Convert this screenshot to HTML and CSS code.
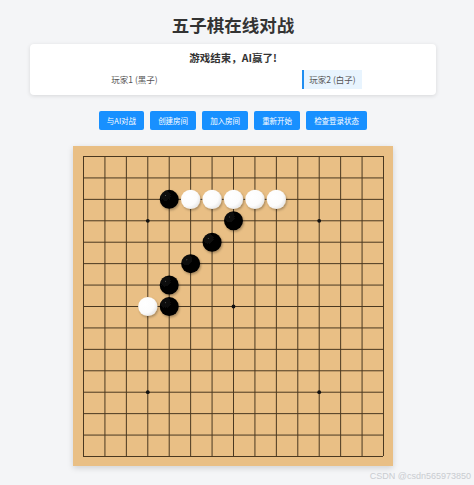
FILE: index.html
```html
<!DOCTYPE html>
<html lang="zh-CN">
<head>
<meta charset="utf-8">
<title>五子棋在线对战</title>
<link rel="stylesheet" href="styles.css">
</head>
<body>
<div class="page">
  <h1 class="title">五子棋在线对战</h1>
  <div class="card">
    <div class="status">游戏结束，AI赢了!</div>
    <div class="players">
      <div class="player">玩家1 (黑子)</div>
      <div class="player active">玩家2 (白子)</div>
    </div>
  </div>
  <div class="actions">
    <button class="btn">与AI对战</button>
    <button class="btn">创建房间</button>
    <button class="btn">加入房间</button>
    <button class="btn">重新开始</button>
    <button class="btn">检查登录状态</button>
  </div>
  <div class="board">
    <svg class="board-svg" width="320" height="320" viewBox="0 0 320 320">
      <defs>
        <radialGradient id="gb" cx="30%" cy="30%" r="70%">
          <stop offset="0" stop-color="#5a5a5a"/>
          <stop offset="0.07" stop-color="#0a0a0a"/>
          <stop offset="1" stop-color="#000"/>
        </radialGradient>
        <radialGradient id="gw" cx="35%" cy="35%" r="65%">
          <stop offset="0" stop-color="#ffffff"/>
          <stop offset="0.75" stop-color="#fcfcfc"/>
          <stop offset="1" stop-color="#ececec"/>
        </radialGradient>
        <filter id="sh" x="-30%" y="-30%" width="170%" height="170%">
          <feDropShadow dx="1" dy="1.5" stdDeviation="1.2" flood-color="#000" flood-opacity="0.3"/>
        </filter>
      </defs>
      <path class="grid" d="M10 10.5H310M10 31.93H310M10 53.36H310M10 74.79H310M10 96.21H310M10 117.64H310M10 139.07H310M10 160.5H310M10 181.93H310M10 203.36H310M10 224.79H310M10 246.21H310M10 267.64H310M10 289.07H310M10 310.5H310M10.5 10V310M31.93 10V310M53.36 10V310M74.79 10V310M96.21 10V310M117.64 10V310M139.07 10V310M160.5 10V310M181.93 10V310M203.36 10V310M224.79 10V310M246.21 10V310M267.64 10V310M289.07 10V310M310.5 10V310"/>
      <g class="stars">
        <circle cx="74.79" cy="74.79" r="1.9"/>
        <circle cx="246.21" cy="74.79" r="1.9"/>
        <circle cx="160.5" cy="160.5" r="1.9"/>
        <circle cx="74.79" cy="246.21" r="1.9"/>
        <circle cx="246.21" cy="246.21" r="1.9"/>
      </g>
      <g filter="url(#sh)">
        <circle cx="96.21" cy="53.36" r="9.5" fill="url(#gb)"/>
        <circle cx="160.5" cy="74.79" r="9.5" fill="url(#gb)"/>
        <circle cx="139.07" cy="96.21" r="9.5" fill="url(#gb)"/>
        <circle cx="117.64" cy="117.64" r="9.5" fill="url(#gb)"/>
        <circle cx="96.21" cy="139.07" r="9.5" fill="url(#gb)"/>
        <circle cx="96.21" cy="160.5" r="9.5" fill="url(#gb)"/>
        <circle cx="117.64" cy="53.36" r="9.6" fill="url(#gw)"/>
        <circle cx="139.07" cy="53.36" r="9.6" fill="url(#gw)"/>
        <circle cx="160.5" cy="53.36" r="9.6" fill="url(#gw)"/>
        <circle cx="181.93" cy="53.36" r="9.6" fill="url(#gw)"/>
        <circle cx="203.36" cy="53.36" r="9.6" fill="url(#gw)"/>
        <circle cx="74.79" cy="160.5" r="9.6" fill="url(#gw)"/>
      </g>
    </svg>
  </div>
</div>
<div class="watermark">CSDN @csdn565973850</div>
</body>
</html>
```
FILE: styles.css
```css
* {
  box-sizing: border-box;
}

html, body {
  margin: 0;
  padding: 0;
}

body {
  background: #f4f5f7;
  font-family: "Noto Sans", "Noto Sans CJK SC", sans-serif;
  color: #333;
  width: 474px;
  height: 485px;
  overflow: hidden;
  position: relative;
}

.page {
  width: 466px;
  display: flex;
  flex-direction: column;
  align-items: center;
  padding-top: 15px;
}

.title {
  margin: 0 0 9px;
  font-size: 17.5px;
  line-height: 20px;
  font-weight: 700;
  color: #333;
  font-family: "Noto Sans CJK SC", sans-serif;
}

.card {
  width: 406px;
  background: #fff;
  border-radius: 4px;
  box-shadow: 0 1px 4px rgba(0, 0, 0, 0.12);
  padding: 6px 5px 6px;
  display: flex;
  flex-direction: column;
  gap: 4px;
}

.status {
  text-align: center;
  font-size: 10.5px;
  line-height: 16px;
  font-weight: 700;
  color: #333;
  font-family: "Noto Sans CJK SC", sans-serif;
}

.players {
  display: flex;
  justify-content: space-around;
}

.player {
  font-size: 8.5px;
  line-height: 19px;
  height: 19px;
  padding: 0 6px 0 5px;
  border-left: 2px solid transparent;
  color: #555;
  font-family: "Noto Sans CJK SC", sans-serif;
}

.player.active {
  border-left-color: #1f8ef1;
  background: #e8f4fe;
}

.actions {
  margin-top: 16px;
  display: flex;
  gap: 6px;
  justify-content: center;
}

.btn {
  height: 19px;
  padding: 0 8px;
  border: none;
  border-radius: 2px;
  background: #1890ff;
  color: #fff;
  font-size: 7.5px;
  line-height: 19px;
  font-family: "Noto Sans CJK SC", sans-serif;
}

.board {
  margin-top: 16px;
  width: 320px;
  height: 320px;
  background: #e9bf85;
  box-shadow: 0 2px 6px rgba(0, 0, 0, 0.15);
}

.board-svg {
  display: block;
}

.grid {
  fill: none;
  stroke: #4a3820;
  stroke-width: 1;
}

.stars circle {
  fill: #111;
}

.watermark {
  position: absolute;
  right: 3px;
  bottom: 3px;
  font-size: 9px;
  line-height: 11px;
  color: #c9ccd1;
  font-family: "Liberation Sans", sans-serif;
}
```
